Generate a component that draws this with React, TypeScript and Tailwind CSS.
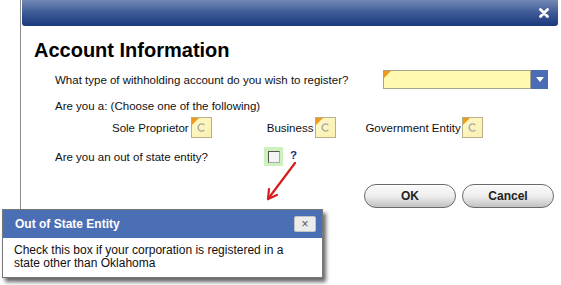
import React from 'react';

const Corner: React.FC = () => (
  <span className="absolute left-0 top-0 h-0 w-0 border-l-[7px] border-b-[7px] border-l-[#ee9a1c] border-b-transparent" />
);

const RadioBox: React.FC = () => (
  <span className="relative flex h-[21px] w-[21px] items-center justify-center border border-[#b9b08a] bg-gradient-to-br from-[#fff9c8] to-[#f9f0b0]">
    <Corner />
    <svg width="9" height="9" viewBox="0 0 9 9" aria-hidden="true">
      <path d="M7.3 2A3.6 3.6 0 1 0 7.3 7" fill="none" stroke="#a8a8a8" strokeWidth="1.4" />
    </svg>
  </span>
);

const PillButton: React.FC<{ label: string }> = ({ label }) => (
  <button className="flex h-[24px] w-[92px] items-center justify-center rounded-full border border-[#6a6a6a] bg-gradient-to-b from-[#fafafa] via-[#eeeeee] to-[#c2c2c2] text-[12px] font-bold text-[#222] shadow-[inset_0_1px_0_#ffffff]">
    {label}
  </button>
);

export default function App() {
  return (
    <div className="relative h-[285px] w-[561px] overflow-hidden bg-white font-['Liberation_Sans',Arial,sans-serif] text-[#111]">
      {/* dialog */}
      <div className="ml-[20px] h-[211px] w-[538px] border-l border-[#8c8c8c]">
        <div className="ml-[1px] flex h-[26px] items-center justify-end rounded-b-[3px] bg-gradient-to-b from-[#7289b4] via-[#3d5a96] to-[#1a3a7e] pr-[9px]">
          <svg width="10" height="10" viewBox="0 0 10 10" aria-hidden="true">
            <path d="M1.5 1.5L8.5 8.5M8.5 1.5L1.5 8.5" stroke="#ffffff" strokeWidth="2.8" strokeLinecap="round" />
          </svg>
        </div>

        <h1 className="mt-[13px] pl-[13px] text-[20px] font-bold leading-[23px] text-black">Account Information</h1>

        <div className="pl-[34px] text-[11.5px] leading-[14px]">
          <div className="mt-[8px] flex h-[19px] items-center">
            <span className="w-[328px]">What type of withholding account do you wish to register?</span>
            <span className="relative flex h-[19px] w-[148px] border border-[#a7a48e] bg-[#fffaaf]">
              <Corner />
            </span>
            <span className="flex h-[19px] w-[17px] items-center justify-center bg-[#4a6db6]">
              <span className="h-0 w-0 border-x-[4px] border-t-[5px] border-x-transparent border-t-white" />
            </span>
          </div>

          <div className="mt-[10px]">Are you a: (Choose one of the following)</div>

          <div className="mt-[4px] flex h-[21px] items-center">
            <span className="ml-[57px] flex items-center gap-[2px]">
              Sole Proprietor <RadioBox />
            </span>
            <span className="ml-[55px] flex items-center gap-[2px]">
              Business <RadioBox />
            </span>
            <span className="ml-[29px] flex items-center gap-[1px]">
              Government Entity <RadioBox />
            </span>
          </div>

          <div className="mt-[9px] flex h-[19px] items-center">
            <span className="w-[209px]">Are you an out of state entity?</span>
            <span className="flex h-[19px] w-[19px] items-center justify-center bg-[#cdf1bd]">
              <span className="h-[12px] w-[12px] border border-[#555] border-b-[#aaa] border-r-[#aaa] bg-[#f4f4f4]" />
            </span>
            <span className="ml-[7px] -mt-[3px] font-bold text-[#1f2a88]">?</span>
          </div>

          <div className="ml-[309px] mt-[18px] flex gap-[6px]">
            <PillButton label="OK" />
            <PillButton label="Cancel" />
          </div>
        </div>
      </div>

      {/* pointer arrow */}
      <svg className="absolute left-[262px] top-[160px]" width="40" height="44" viewBox="0 0 40 44" aria-hidden="true">
        <path d="M33 3L6 39" stroke="#d71f1f" strokeWidth="2.2" strokeLinecap="round" />
        <path d="M6 39L7 29M6 39L15 35" stroke="#d71f1f" strokeWidth="2.2" strokeLinecap="round" />
      </svg>

      {/* tooltip */}
      <div className="absolute left-[2px] top-[209px] w-[321px] border border-[#777] bg-white shadow-[3px_4px_4px_rgba(0,0,0,0.6)]">
        <div className="flex h-[28px] items-center justify-between bg-[#4b6fb4] pl-[12px] pr-[6px]">
          <span className="text-[12px] font-bold text-white">Out of State Entity</span>
          <span className="flex h-[16px] w-[22px] items-center justify-center rounded-[2px] border border-[#c4c4c4] bg-[#ececec] text-[12px] leading-none text-[#555]">
            ×
          </span>
        </div>
        <p className="px-[11px] pb-[7px] pt-[6px] text-[12px] leading-[13px] text-[#111]">
          Check this box if your corporation is registered in a
          <br />
          state other than Oklahoma
        </p>
      </div>
    </div>
  );
}
